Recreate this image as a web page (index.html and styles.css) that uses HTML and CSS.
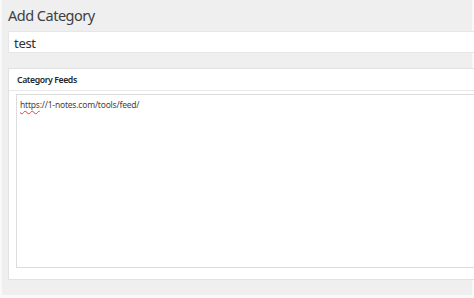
FILE: index.html
```html
<!DOCTYPE html>
<html>
<head>
<meta charset="utf-8">
<link rel="stylesheet" href="styles.css">
</head>
<body>
<div class="frame">
  <h1 class="title">Add Category</h1>
  <div class="name-input">test</div>
  <div class="card">
    <div class="card-head">Category Feeds</div>
    <div class="card-body">
      <div class="feeds"><span class="spell">https</span>://1-notes.com/tools/feed/</div>
    </div>
  </div>
</div>
</body>
</html>
```

FILE: styles.css
```css
html, body {
  margin: 0;
  padding: 0;
  background: #f9f9f9;
  overflow: hidden;
}
body {
  width: 474px;
  height: 298px;
  font-family: "Noto Sans", "Open Sans", sans-serif;
}
.frame {
  margin: 0 2px 0 2px;
  width: 470px;
  height: 295px;
  background: #efefef;
  padding: 0 0 0 6px;
  box-sizing: border-box;
  display: flex;
  flex-direction: column;
}
.title {
  margin: 0;
  padding-top: 5px;
  height: 27px;
  box-sizing: border-box;
  font-size: 14.5px;
  font-weight: 400;
  color: #3c4043;
  line-height: 20px;
  letter-spacing: -0.5px;
}
.name-input {
  width: 480px;
  height: 22px;
  margin-top: 4px;
  box-sizing: border-box;
  background: #fff;
  border-top: 1px solid #e6e6e6;
  border-bottom: 1px solid #e6e6e6;
  border-left: 1px solid #e6e6e6;
  padding: 1px 0 0 5px;
  font-size: 13px;
  line-height: 20px;
  letter-spacing: -0.3px;
  color: #2c3338;
}
.card {
  margin-top: 15px;
  width: 480px;
  height: 212px;
  background: #fff;
  border: 1px solid #e2e2e2;
  box-sizing: border-box;
  display: flex;
  flex-direction: column;
}
.card-head {
  height: 22px;
  box-sizing: border-box;
  padding: 5px 0 0 8px;
  border-bottom: 1px solid #e8e8e8;
  font-size: 8.7px;
  font-weight: 600;
  color: #23282d;
  line-height: 13px;
  letter-spacing: -0.4px;
}
.card-body {
  padding: 3px 0 11px 7px;
  flex: 1;
  display: flex;
}
.feeds {
  flex: 1;
  border: 1px solid #dcdcdc;
  padding: 4px 0 0 3px;
  font-size: 8.5px;
  line-height: 12px;
  letter-spacing: -0.2px;
  color: #444;
}
.spell {
  text-decoration: underline wavy #e04040;
  text-decoration-thickness: 1px;
  text-underline-offset: 2px;
}
```
